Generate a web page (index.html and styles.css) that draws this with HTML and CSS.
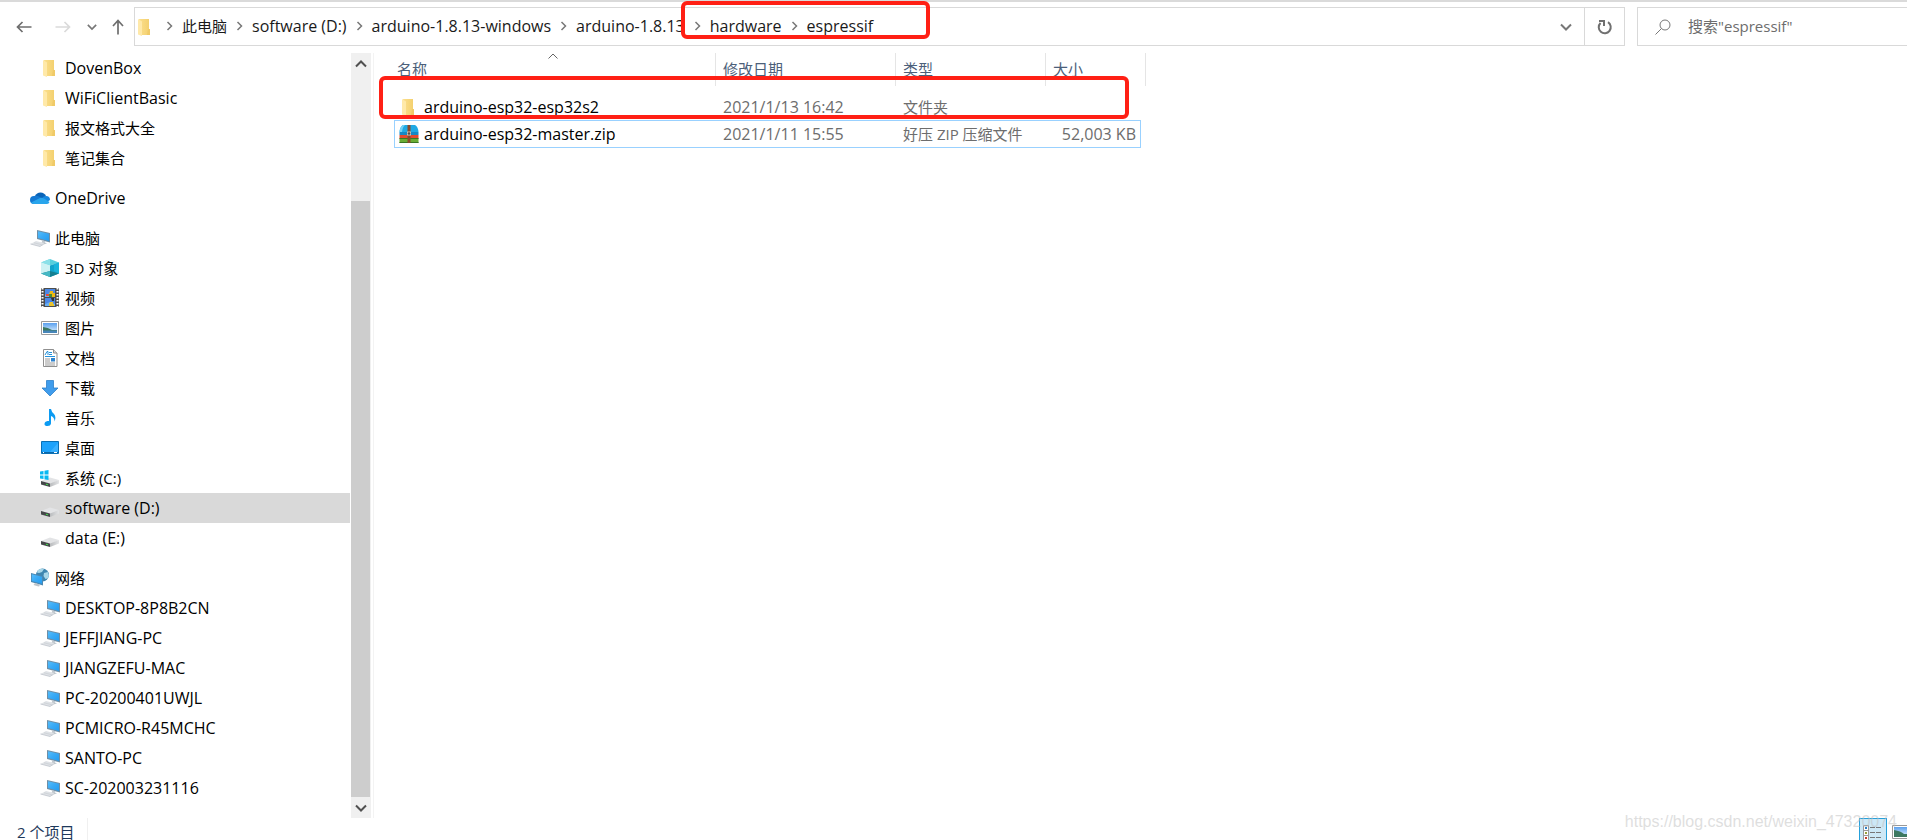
FILE: index.html
```html
<!DOCTYPE html>
<html lang="zh-CN">
<head>
  <meta charset="utf-8">
  <title>espressif</title>
  <link rel="stylesheet" href="styles.css">
</head>
<body>
  <!-- shared icons -->
  <svg class="sprite" aria-hidden="true">
    <defs>
      <linearGradient id="g-folder" x1="0" x2="1"><stop offset="0" stop-color="#fbdf8d"/><stop offset="1" stop-color="#f3cf6c"/></linearGradient>
      <linearGradient id="g-screen" x1="0" x2="1" y2="1"><stop offset="0" stop-color="#55bdfb"/><stop offset="0.5" stop-color="#38a9f5"/><stop offset="1" stop-color="#249cf0"/></linearGradient>
      <linearGradient id="g-disk" x1="0" x2="1"><stop offset="0" stop-color="#b9bbbd"/><stop offset="1" stop-color="#e2e3e5"/></linearGradient>
      <linearGradient id="g-sky" x2="0" y2="1"><stop offset="0" stop-color="#5aa0ee"/><stop offset="1" stop-color="#e8f6ff"/></linearGradient>
      <symbol id="folder" viewBox="0 0 20 20">
        <path d="M4 2h10v10h1v6H6z" fill="url(#g-folder)"/>
        <path d="M13 12h2v6h-3z" fill="#f0ca68"/>
        <path d="M3 2l4 2.500v14.500L3 17.500z" fill="#ffe9a9"/>
      </symbol>
      <symbol id="cloud" viewBox="0 0 20 20">
        <path d="M5 8a6 6 0 0 1 11 0l-3 5z" fill="#0a64b8"/>
        <path d="M4 16a4 4 0 0 1 0-8 6 6 0 0 1 5 .5l5 3L9 16z" fill="#1479d3"/>
        <path d="M12 10a5 5 0 0 1 4-2 4 4 0 0 1 4 4l-3 2z" fill="#1687df"/>
        <path d="M1 14.500l9-4.500q2-.7 4 .6L19.500 14a3 3 0 0 1-2.500 2H4a4 4 0 0 1-3-1.500z" fill="#29a5ec"/>
      </symbol>
      <symbol id="pc" viewBox="0 0 20 20">
        <path d="M7 2l13 3v9.500L7 11z" fill="#6f8ea5"/>
        <path d="M8 3.300l11 2.500v7.300L8 10z" fill="url(#g-screen)"/>
        <path d="M12 12.300l3 .8v1.500l2 .8-2.500.8-4-1.200 1.500-.7z" fill="#c3c9cf"/>
        <path d="M6 13l9 2.200-5 3.300-9.500-2.500z" fill="#dfe2e6"/>
        <path d="M.5 16l9.500 2.500 5-3.300" fill="none" stroke="#b8bec5" stroke-width=".7"/>
        <path d="M4 14.800l8.500 2.100" stroke="#c4c9cf" stroke-width=".6"/>
      </symbol>
      <symbol id="cube" viewBox="0 0 20 20">
        <path d="M10 1l9 3.500-9 3-9-3z" fill="#55cfdd"/>
        <path d="M10 1v6.500l-9-3z" fill="#8be0e8"/>
        <path d="M1 4.500l9 3V19l-9-3.500z" fill="#cdf2f4"/>
        <path d="M19 4.500l-9 3V19l9-3.500z" fill="#10a3cb"/>
        <path d="M19 4.500l-5 1.700V13l5 2.500z" fill="#19b4db"/>
        <path d="M1 15.500l9-2.500 9 2.500-9 3.500z" fill="#157f91"/>
        <path d="M1 15.500l9-2.500v6z" fill="#45b8c4"/>
      </symbol>
      <symbol id="video" viewBox="0 0 20 20">
        <path d="M1 0h18v19H1z" fill="#4d4d4d"/>
        <path d="M2.500 0v19M17.500 0v19" stroke="#fff" stroke-width="2" stroke-dasharray="1.500 1.500"/>
        <path d="M5 1h10v8H5zM5 10h10v8H5z" fill="#4b88e4"/>
        <path d="M5 7l5-2 5 2v2H5zM5 16l5-2 5 2v2H5z" fill="#69aef2"/>
        <path d="M10 3h3v2h2v4h-4V7H9z" fill="#ecb914"/>
        <path d="M6 6h3v2H6z" fill="#e64a3a"/><path d="M9 6h3v3H9z" fill="#438b39"/>
        <path d="M10 14h3v2h1v2H9v-2z" fill="#e9c32d"/><path d="M11 10h3v3h-2z" fill="#333"/>
      </symbol>
      <symbol id="picture" viewBox="0 0 20 20">
        <path d="M1.500 3.500h17v13h-17z" fill="#fff" stroke="#9b9b9b"/>
        <path d="M3 5h14v10H3z" fill="url(#g-sky)"/>
        <path d="M3 9q5 .5 9 3h5v1H3z" fill="#3c7860"/>
        <path d="M3 12.500h14V15H3z" fill="#4786b9"/>
      </symbol>
      <symbol id="doc" viewBox="0 0 20 20">
        <path d="M3.500 1.500h10l3.500 3.500v13.500H3.500z" fill="#fff" stroke="#8f8f8f"/>
        <path d="M13.500 1.500V5H17" fill="#ddd" stroke="#8f8f8f"/>
        <path d="M5 7l2-3.500h1V7M9 4.500h3M9 6.500h3M5 8.500h10" fill="none" stroke="#2492dc"/>
        <path d="M5 11h5M5 13h5M5 15h10M5 17h10" stroke="#8f8f8f" stroke-width=".9"/>
        <path d="M11 10h4v3.500h-4z" fill="#2e83ce"/>
      </symbol>
      <symbol id="download" viewBox="0 0 20 20">
        <path d="M6.500 2.500h7V10h4.500l-8 8-8-8h4.500z" fill="#3f9cec" stroke="#2d80ca" stroke-width=".8"/>
      </symbol>
      <symbol id="music" viewBox="0 0 20 20">
        <path d="M9 1h2q.5 3 3 5 2.500 3 .5 7.500Q14.500 9 11 8v7.500Q10.500 18 7.500 18 4.500 18 4.500 16q0-2.500 3-3H9z" fill="#0c9bf2"/>
      </symbol>
      <symbol id="desktop" viewBox="0 0 20 20">
        <path d="M1.500 3.500h17v12h-17z" fill="#1da2fb" stroke="#0a70b5"/>
        <path d="M9 15L18 5v10z" fill="#3bb1ff"/>
        <path d="M2 14.500h16" stroke="#0a67a8"/><path d="M3 14.500h1M14 14.500h3" stroke="#fff"/>
      </symbol>
      <symbol id="disk" viewBox="0 0 20 20">
        <path d="M1 13l9-3.500 9 2.500-8 4z" fill="#e3e4e6"/>
        <path d="M1 13l9 2.500V19l-9-2.500z" fill="#45484a"/>
        <path d="M10 15.500l9-3.500v3.500L10 19z" fill="url(#g-disk)"/>
        <path d="M6 16.200l2 .6" stroke="#42d84c" stroke-width="1.200"/>
      </symbol>
      <symbol id="sysdisk" viewBox="0 0 20 20">
        <use href="#disk"/>
        <path d="M0 3.500l3.500-.5v3.500H0zM4.500 2.800L8.500 2v4.500h-4zM0 7.500h3.500V11L0 10.500zM4.500 7.500h4V12l-4-.8z" fill="#08b9f2"/>
      </symbol>
      <symbol id="network" viewBox="0 0 20 20">
        <circle cx="12.500" cy="7" r="6.500" fill="#3f86b0"/>
        <path d="M8 2q3-2 6-1l-2 3-3 1-2-.5zM14 5l4-1q1.500 3 .5 6l-3 1-2-3z" fill="#a9d7e9"/>
        <path d="M1 5l12 3v9.500L1 14z" fill="#4b88b2"/>
        <path d="M1.800 6.200L12 8.800v7L1.800 13z" fill="url(#g-screen)"/>
        <path d="M5 15l4 1.200v1l1.500.5-2 .8-5-1.500z" fill="#bdc4ca"/>
      </symbol>
      <symbol id="zip" viewBox="0 0 20 20">
        <path d="M4 1h12q3 1.500 3.500 7H.500Q1 2.500 4 1z" fill="#20a9e4"/>
        <path d="M4 1h2Q3.500 3 3 8H.500Q1 2.500 4 1z" fill="#73d0f4"/>
        <path d="M.5 8h19v3H.5z" fill="#1689c5"/>
        <path d="M.5 11h19v4H.5z" fill="#e24c2e"/>
        <path d="M.5 15h19v4H.5z" fill="#69ad35"/>
        <path d="M.5 14.500h19M.5 18.500h19" stroke="#397623"/>
        <path d="M8.500 1h3v18h-3z" fill="#8b4a2b"/>
        <path d="M8 7.500h4v4H8z" fill="#c9c2b8"/><circle cx="10" cy="9.500" r="1.300" fill="#5b4b41"/>
      </symbol>
      <symbol id="sep" viewBox="0 0 10 10"><path d="M3 1l4 4-4 4" fill="none" stroke="#777" stroke-width="1.500"/></symbol>
      <symbol id="down" viewBox="0 0 12 12"><path d="M1 3.500l5 5 5-5" fill="none" stroke="currentColor" stroke-width="2"/></symbol>
      <symbol id="up" viewBox="0 0 12 12"><path d="M1 8.500l5-5 5 5" fill="none" stroke="currentColor" stroke-width="2"/></symbol>
    </defs>
  </svg>

  <div class="window">
    <header class="toolbar">
      <div class="nav-buttons">
        <button class="nav-btn" aria-label="后退"><svg width="16" height="14" viewBox="0 0 16 14"><path d="M15.500 7H1.500M6.500 2l-5 5 5 5" fill="none" stroke="#6e6e6e" stroke-width="1.700"/></svg></button>
        <button class="nav-btn forward" aria-label="前进" disabled><svg width="16" height="14" viewBox="0 0 16 14"><path d="M.5 7h14M9.500 2l5 5-5 5" fill="none" stroke="#dadada" stroke-width="1.700"/></svg></button>
        <button class="nav-btn recent" aria-label="最近浏览的位置"><svg width="10" height="10"><use href="#down"/></svg></button>
        <button class="nav-btn" aria-label="上移"><svg width="12" height="16" viewBox="0 0 12 16"><path d="M6 15.500V1.500M1 7l5-5.500L11 7" fill="none" stroke="#6e6e6e" stroke-width="1.700"/></svg></button>
      </div>
      <div class="address">
        <svg class="icon"><use href="#folder"/></svg>
        <nav class="crumbs">
          <svg class="sep"><use href="#sep"/></svg><a href="#">此电脑</a>
          <svg class="sep"><use href="#sep"/></svg><a href="#" class="latin">software (D:)</a>
          <svg class="sep"><use href="#sep"/></svg><a href="#" class="latin">arduino-1.8.13-windows</a>
          <svg class="sep"><use href="#sep"/></svg><a href="#" class="latin">arduino-1.8.13</a>
          <svg class="sep"><use href="#sep"/></svg><a href="#" class="latin">hardware</a>
          <svg class="sep"><use href="#sep"/></svg><a href="#" class="latin">espressif</a>
        </nav>
        <button class="history" aria-label="以前的位置"><svg width="12" height="12"><use href="#down"/></svg></button>
        <button class="refresh" aria-label="刷新"><svg width="16" height="16" viewBox="0 0 16 16"><path d="M11 3.200a6 6 0 1 1-7.500.8M2 2h5v5" fill="none" stroke="#707070" stroke-width="2"/></svg></button>
      </div>
      <label class="search">
        <svg width="16" height="16" viewBox="0 0 16 16"><circle cx="10" cy="6" r="5" fill="none" stroke="#777"/><path d="M6.500 9.500L.5 15.500" stroke="#777"/></svg>
        <input type="text" placeholder='搜索"espressif"' aria-label="搜索">
      </label>
    </header>

    <main class="content">
      <nav class="tree">
        <ul>
          <li class="sub latin"><a href="#"><svg class="icon"><use href="#folder"/></svg>DovenBox</a></li>
          <li class="sub latin"><a href="#"><svg class="icon"><use href="#folder"/></svg>WiFiClientBasic</a></li>
          <li class="sub"><a href="#"><svg class="icon"><use href="#folder"/></svg>报文格式大全</a></li>
          <li class="sub"><a href="#"><svg class="icon"><use href="#folder"/></svg>笔记集合</a></li>
        </ul>
        <ul>
          <li class="latin"><a href="#"><svg class="icon"><use href="#cloud"/></svg>OneDrive</a></li>
        </ul>
        <ul>
          <li><a href="#"><svg class="icon"><use href="#pc"/></svg>此电脑</a></li>
          <li class="sub"><a href="#"><svg class="icon"><use href="#cube"/></svg>3D 对象</a></li>
          <li class="sub"><a href="#"><svg class="icon"><use href="#video"/></svg>视频</a></li>
          <li class="sub"><a href="#"><svg class="icon"><use href="#picture"/></svg>图片</a></li>
          <li class="sub"><a href="#"><svg class="icon"><use href="#doc"/></svg>文档</a></li>
          <li class="sub"><a href="#"><svg class="icon"><use href="#download"/></svg>下载</a></li>
          <li class="sub"><a href="#"><svg class="icon"><use href="#music"/></svg>音乐</a></li>
          <li class="sub"><a href="#"><svg class="icon"><use href="#desktop"/></svg>桌面</a></li>
          <li class="sub"><a href="#"><svg class="icon"><use href="#sysdisk"/></svg>系统 (C:)</a></li>
          <li class="sub latin selected"><a href="#"><svg class="icon"><use href="#disk"/></svg>software (D:)</a></li>
          <li class="sub latin"><a href="#"><svg class="icon"><use href="#disk"/></svg>data (E:)</a></li>
        </ul>
        <ul>
          <li><a href="#"><svg class="icon"><use href="#network"/></svg>网络</a></li>
          <li class="sub latin"><a href="#"><svg class="icon"><use href="#pc"/></svg>DESKTOP-8P8B2CN</a></li>
          <li class="sub latin"><a href="#"><svg class="icon"><use href="#pc"/></svg>JEFFJIANG-PC</a></li>
          <li class="sub latin"><a href="#"><svg class="icon"><use href="#pc"/></svg>JIANGZEFU-MAC</a></li>
          <li class="sub latin"><a href="#"><svg class="icon"><use href="#pc"/></svg>PC-20200401UWJL</a></li>
          <li class="sub latin"><a href="#"><svg class="icon"><use href="#pc"/></svg>PCMICRO-R45MCHC</a></li>
          <li class="sub latin"><a href="#"><svg class="icon"><use href="#pc"/></svg>SANTO-PC</a></li>
          <li class="sub latin"><a href="#"><svg class="icon"><use href="#pc"/></svg>SC-202003231116</a></li>
        </ul>
      </nav>
      <div class="scrollbar">
        <button aria-label="向上滚动"><svg width="12" height="12"><use href="#up"/></svg></button>
        <div class="track"><div class="thumb"></div></div>
        <button aria-label="向下滚动"><svg width="12" height="12"><use href="#down"/></svg></button>
      </div>
      <section class="files">
        <table>
          <colgroup>
            <col class="col-name"><col class="col-date"><col class="col-type"><col class="col-size"><col class="col-end">
          </colgroup>
          <thead>
            <tr>
              <th>名称<svg class="sort" viewBox="0 0 10 6"><path d="M.5 5.500L5 1l4.500 4.500" fill="none" stroke="#666"/></svg></th>
              <th>修改日期</th>
              <th>类型</th>
              <th colspan="2">大小</th>
            </tr>
          </thead>
          <tbody>
            <tr>
              <td class="latin"><a href="#"><svg class="icon"><use href="#folder"/></svg>arduino-esp32-esp32s2</a></td>
              <td class="latin">2021/1/13 16:42</td>
              <td>文件夹</td>
              <td class="size"></td>
            </tr>
            <tr class="focused">
              <td class="latin"><a href="#"><svg class="icon"><use href="#zip"/></svg>arduino-esp32-master.zip</a></td>
              <td class="latin">2021/1/11 15:55</td>
              <td>好压 ZIP 压缩文件</td>
              <td class="size latin">52,003 KB</td>
            </tr>
          </tbody>
        </table>
      </section>
    </main>

    <footer class="status">
      <span class="count">2 个项目</span>
      <div class="views">
        <button class="view active" aria-label="详细信息"><svg width="20" height="28" viewBox="0 0 20 28"><path d="M.5 7.500h5v20h-5zM.5 12.500h5M.5 17.500h5M.5 22.500h5" fill="#fff" stroke="#999"/><path d="M2 9h2v2H2z" fill="#2b7fc4"/><path d="M2 14h2v2H2z" fill="#98a23b"/><path d="M2 19h2v2H2z" fill="#c43e2b"/><path d="M7 9.500h5M13 9.500h5M7 14.500h5M13 14.500h5M7 19.500h5M13 19.500h5" stroke="#777"/></svg></button>
        <button class="view" aria-label="大图标"><svg width="20" height="28" viewBox="0 0 20 28"><path d="M.5 7.500h19v13H.5z" fill="#fff" stroke="#999"/><path d="M2 9h16v10H2z" fill="url(#g-sky)"/><path d="M2 12q7 1 10 4h6v3H2z" fill="#3c7860"/></svg></button>
      </div>
    </footer>
  </div>

  <!-- highlights -->
  <div class="mark mark-path"></div>
  <div class="mark mark-file"></div>
  <div class="watermark">https://blog.csdn.net/weixin_47320074</div>
</body>
</html>
```
FILE: styles.css
```css
* {
  box-sizing: border-box;
}
body {
  margin: 0;
  overflow: hidden;
  background: #fff;
  color: #000;
  font-family: "Open Sans", "Noto Sans CJK SC", sans-serif;
  font-size: 15px;
  line-height: 20px;
}
a {
  color: inherit;
  text-decoration: none;
}
button {
  padding: 0;
  border: none;
  background: none;
  display: flex;
  align-items: center;
  justify-content: center;
}
ul {
  list-style: none;
  margin: 0;
  padding: 0;
}
.latin {
  font-size: 16px;
}
.sprite {
  position: absolute;
  width: 0;
  height: 0;
}
.icon {
  width: 20px;
  height: 20px;
  flex: none;
}
.window {
  display: flex;
  flex-direction: column;
  height: 100vh;
  border-top: 2px solid #dadada;
}

/* toolbar */
.toolbar {
  display: flex;
  flex: none;
  height: 51px;
  padding-top: 5px;
  align-items: flex-start;
}
.nav-buttons {
  display: flex;
  align-items: center;
  width: 134px;
  height: 39px;
  padding-left: 16px;
}
.nav-btn {
  color: #777;
}
.forward {
  margin-left: 23px;
}
.recent {
  margin: 0 15px 0 16px;
}
.address {
  display: flex;
  flex: 1;
  align-items: center;
  height: 39px;
  border: 1px solid #d9d9d9;
}
.crumbs {
  display: flex;
  flex: 1;
  align-items: center;
  padding: 0 0 2px 2px;
}
.crumbs a {
  color: #1a1a1a;
}
.sep {
  width: 25px;
  height: 10px;
  flex: none;
}
.history {
  width: 36px;
  height: 37px;
  color: #777;
}
.refresh {
  width: 40px;
  height: 37px;
  border-left: 1px solid #d9d9d9;
}
.search {
  display: flex;
  align-items: center;
  width: 270px;
  height: 39px;
  margin-left: 12px;
  padding-left: 17px;
  border: 1px solid #d9d9d9;
  border-right: none;
}
.search input {
  flex: 1;
  min-width: 0;
  margin-left: 17px;
  padding: 0 0 2px;
  border: none;
  outline: none;
  font: inherit;
}
.search input::placeholder {
  color: #6d6d6d;
  opacity: 1;
}

/* folder tree */
.content {
  display: flex;
  flex: 1;
  min-height: 0;
}
.tree {
  width: 351px;
  padding-right: 1px;
  overflow: hidden;
}
.tree ul {
  margin-bottom: 10px;
}
.tree a {
  display: flex;
  align-items: center;
  gap: 5px;
  height: 30px;
  padding-left: 30px;
}
.tree .sub a {
  padding-left: 40px;
}
.tree .selected {
  background: #d9d9d9;
}
.scrollbar {
  display: flex;
  flex-direction: column;
  width: 20px;
  background: #f0f0f0;
  color: #505050;
}
.scrollbar button {
  height: 21px;
  color: inherit;
}
.track {
  display: flex;
  flex: 1;
}
.thumb {
  width: 19px;
  margin-top: 127px;
  background: #cdcdcd;
}

/* file list */
.files {
  flex: 1;
  margin-left: 2px;
  padding-left: 20px;
  border-left: 1px solid #f3f3f3;
}
table {
  width: 752px;
  table-layout: fixed;
  border-collapse: separate;
  border-spacing: 0;
}
.col-name {
  width: 322px;
}
.col-date {
  width: 180px;
}
.col-type {
  width: 150px;
}
.col-size {
  width: 95px;
}
.col-end {
  width: 5px;
}
th {
  position: relative;
  height: 33px;
  padding: 0 0 2px 7px;
  border-right: 1px solid #e5e5e5;
  color: #4c607a;
  font-weight: normal;
  text-align: left;
}
th:first-child {
  padding-left: 3px;
}
.sort {
  position: absolute;
  top: 0;
  left: 48%;
  width: 10px;
  height: 6px;
}
tbody::before {
  content: "";
  display: block;
  height: 7px;
}
td {
  height: 27px;
  padding: 0 0 0 7px;
  border: 1px solid transparent;
  border-width: 1px 0;
  color: #6d6d6d;
}
td:first-child {
  padding-left: 4px;
  border-left-width: 1px;
  color: #000;
}
td a {
  display: flex;
  align-items: center;
  gap: 5px;
}
td.size {
  padding-right: 4px;
  border-right-width: 1px;
  text-align: right;
}
.focused td {
  height: 28px;
  border-color: #99d1ff;
}

/* status bar */
.status {
  display: flex;
  flex: none;
  justify-content: space-between;
  height: 22px;
  line-height: 28px;
  color: #1e395b;
}
.count {
  padding: 0 13px 0 17px;
  border-right: 1px solid #f0f0f0;
}
.views {
  display: flex;
  gap: 5px;
  margin-right: -5px;
}
.view {
  width: 20px;
  height: 28px;
}
.view.active {
  width: 28px;
  border: 1px solid #26a0da;
  background: #cce8f6;
}

/* overlays */
.mark {
  position: absolute;
  border: 4px solid #ff2015;
  border-radius: 6px;
}
.mark-path {
  left: 681px;
  top: 1px;
  width: 249px;
  height: 38px;
}
.mark-file {
  left: 379px;
  top: 76px;
  width: 750px;
  height: 43px;
}
.watermark {
  position: absolute;
  right: 10px;
  bottom: 8px;
  color: rgba(190, 190, 190, 0.5);
  font-family: "Liberation Sans", Arial, sans-serif;
  font-size: 16px;
}
```
